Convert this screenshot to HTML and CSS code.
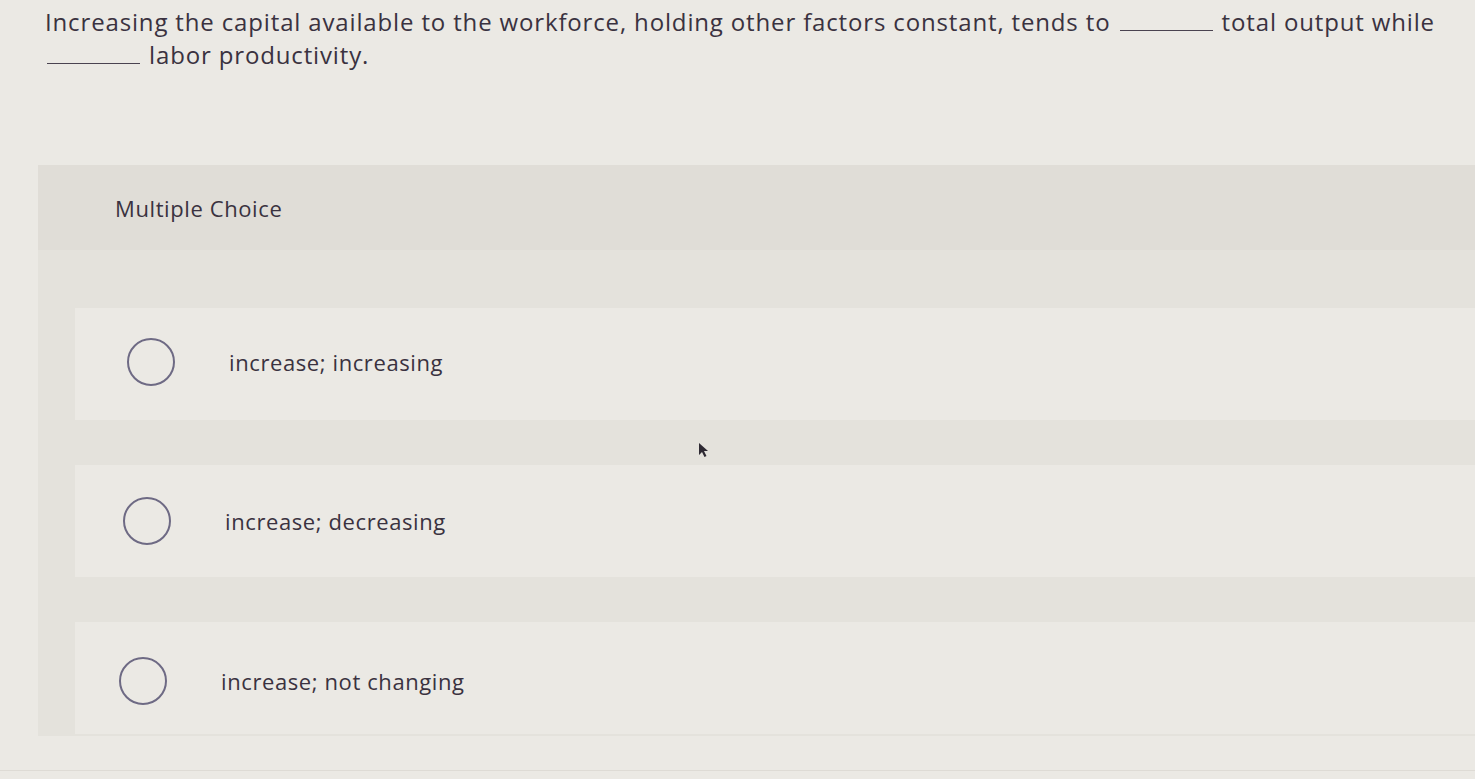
FILE: index.html
```html
<!DOCTYPE html>
<html lang="en">
<head>
<meta charset="utf-8">
<title>Multiple Choice</title>
<link rel="stylesheet" href="styles.css">
</head>
<body>
<main class="page">
  <p class="question">Increasing the capital available to the workforce, holding other factors constant, tends to <span class="blank"></span> total output while <span class="blank"></span> labor productivity.</p>

  <section class="panel">
    <header class="panel-head">Multiple Choice</header>
    <div class="choices">
      <label class="choice c1"><span class="radio"></span><span class="label">increase; increasing</span></label>
      <label class="choice c2"><span class="radio"></span><span class="label">increase; decreasing</span></label>
      <label class="choice c3"><span class="radio"></span><span class="label">increase; not changing</span></label>
    </div>
  </section>
  <div class="footer-line"></div>
  <svg class="cursor" width="12" height="16" viewBox="0 0 12 16" aria-hidden="true"><path d="M1 1 L1 13 L4 10 L6.5 15 L8.5 14 L6 9 L10 9 Z" fill="#2e2a33"/></svg>
</main>
</body>
</html>
```

FILE: styles.css
```css
html, body {
  margin: 0;
  padding: 0;
  height: 100%;
  overflow: hidden;
}
body {
  background: #ebe9e4;
  font-family: "Open Sans", Lato, "Noto Sans", sans-serif;
  color: #3a3240;
}
.page {
  position: relative;
  display: flex;
  flex-direction: column;
  height: 779px;
}
.question {
  margin: 0;
  padding: 5px 10px 0 45px;
  width: 1475px;
  box-sizing: border-box;
  font-size: 24px;
  line-height: 33px;
  letter-spacing: 0.85px;
}
.blank {
  display: inline-block;
  width: 93px;
  height: 1px;
  border-bottom: 1.5px solid #4a4350;
  vertical-align: baseline;
  margin: 0 2px;
}
.panel {
  margin: 94px 0 0 38px;
  background: #e4e2dc;
  display: flex;
  flex-direction: column;
}
.panel-head {
  height: 85px;
  display: flex;
  align-items: center;
  padding-left: 77px;
  font-size: 22px;
  letter-spacing: 0.6px;
  background: #e0ddd7;
}
.choices {
  display: flex;
  flex-direction: column;
  gap: 45px;
  padding: 58px 0 2px 37px;
}
.choice {
  height: 112px;
  display: flex;
  align-items: center;
  gap: 54px;
  padding-left: 52px;
  background: #ebe9e4;
  font-size: 22px;
  letter-spacing: 0.6px;
}
.c1 { padding-bottom: 4px; box-sizing: border-box; }
.c2 { padding-left: 48px; }
.c3 { padding-left: 44px; padding-top: 6px; box-sizing: border-box; }
.radio {
  width: 44px;
  height: 44px;
  border: 2px solid #6e6a84;
  border-radius: 50%;
  flex: none;
}
.footer-line {
  margin-top: 34px;
  height: 1px;
  background: #dedbd5;
}
.cursor {
  position: absolute;
  left: 698px;
  top: 442px;
}
```
